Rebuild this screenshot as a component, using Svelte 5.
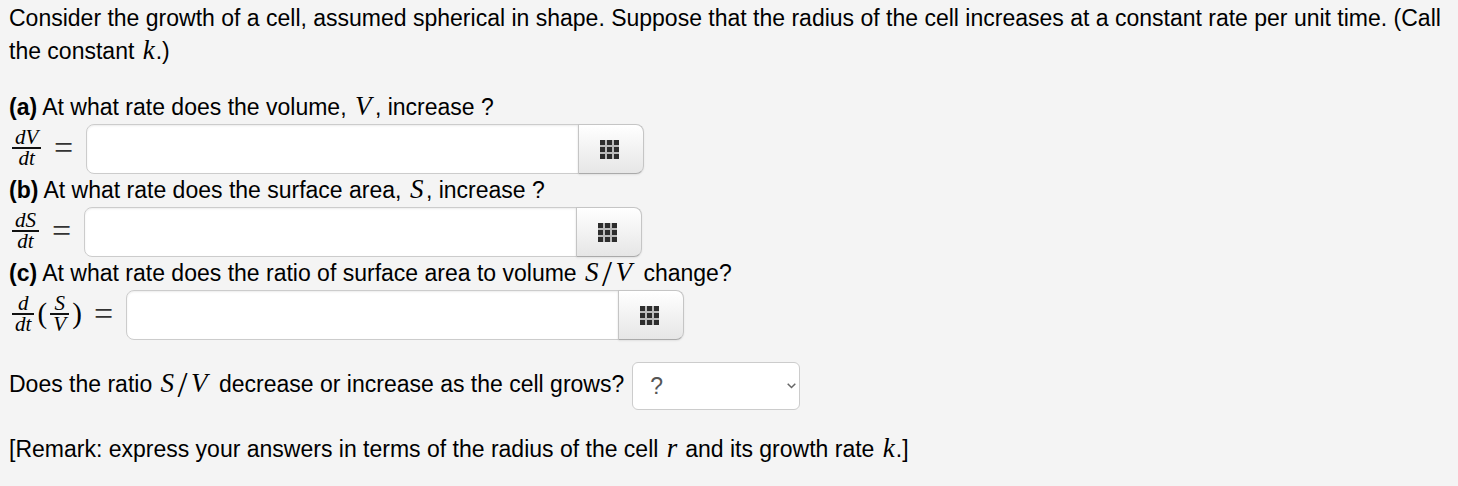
<script>
	let parts = $state([
		{ id: 'volume', name: 'a', before: 'At what rate does the volume,', symbol: 'V', after: ', increase ?', answer: '' },
		{ id: 'surface', name: 'b', before: 'At what rate does the surface area,', symbol: 'S', after: ', increase ?', answer: '' },
		{ id: 'ratio', name: 'c', before: 'At what rate does the ratio of surface area to volume', symbol: 'S/V', after: ' change?', answer: '' }
	])

	let trend = $state('?')
</script>

{#snippet fraction(top, bottom)}
	<span class="fraction">
		<i>{top}</i>
		<i class="bottom">{bottom}</i>
	</span>
{/snippet}

{#snippet symbol(name)}
	{#if name === 'S/V'}
		<i class="math quotient">S<span class="slash">/</span>V</i>
	{:else}
		<i class="math {name}">{name}</i>
	{/if}
{/snippet}

<main>
	<p class="intro">
		Consider the growth of a cell, assumed spherical in shape. Suppose that the radius of the cell increases at a constant rate per unit time. (Call the constant {@render symbol('k')}.)
	</p>

	{#each parts as part}
		<p><b>({part.name})</b> {part.before} {@render symbol(part.symbol)}{part.after}</p>
		<div class="answer">
			<label for={part.id} class={part.id}>
				{#if part.id === 'volume'}
					{@render fraction('dV', 'dt')}
				{:else if part.id === 'surface'}
					{@render fraction('dS', 'dt')}
				{:else}
					{@render fraction('d', 'dt')}
					<span class="paren">(</span>
					{@render fraction('S', 'V')}
					<span class="paren">)</span>
				{/if}
				<span class="equals">=</span>
			</label>
			<div class="group">
				<input id={part.id} type="text" autocomplete="off" bind:value={part.answer} />
				<button type="button" aria-label="Open equation editor">
					<svg width="19" height="19" viewBox="0 0 19 19" fill="#2d2d2d" aria-hidden="true">
						<path d="M0 0H19V19H0z" fill="#bbb" />
						{#each [0, 7, 14] as y}
							{#each [0, 7, 14] as x}
								<rect {x} {y} width="5" height="5" />
							{/each}
						{/each}
					</svg>
				</button>
			</div>
		</div>
	{/each}

	<div class="trend">
		<label for="trend">Does the ratio {@render symbol('S/V')} decrease or increase as the cell grows?</label>
		<div class="select">
			<select id="trend" bind:value={trend}>
				<option>?</option>
				<option>decrease</option>
				<option>increase</option>
			</select>
			<svg width="9" height="6" viewBox="0 0 9 6" fill="none" stroke="#666" stroke-width="1.5" aria-hidden="true">
				<path d="M0.7 0.8 L4.5 4.5 L8.3 0.8" />
			</svg>
		</div>
	</div>

	<p>[Remark: express your answers in terms of the radius of the cell {@render symbol('r')} and its growth rate {@render symbol('k')}.]</p>
</main>

<style>
	:global(body) {
		margin: 0;
		background-color: #f4f4f4;
	}
	main {
		padding: 2px 9px 20px;
		font-family: "Liberation Sans", Arial, sans-serif;
		font-size: 23px;
		line-height: 33px;
		color: #000;
	}
	p {
		margin: 0;
	}
	.intro {
		margin-bottom: 23px;
	}
	.math {
		display: inline-block;
		margin-left: 2px;
		font-family: "Liberation Serif", "Times New Roman", serif;
		font-size: 27px;
		line-height: 24px;
	}
	.V {
		width: 20px;
	}
	.S {
		width: 16px;
	}
	.k {
		width: 13px;
	}
	.r {
		width: 12px;
	}
	.quotient {
		width: 52px;
	}
	.slash {
		display: inline-block;
		width: 17px;
		font-size: 36px;
		font-style: normal;
		text-align: center;
		vertical-align: -5px;
	}
	.answer {
		display: flex;
		align-items: center;
	}
	.answer label {
		display: flex;
		align-items: center;
		flex: none;
		padding-left: 3px;
		box-sizing: border-box;
		font-family: "Liberation Serif", "Times New Roman", serif;
	}
	.volume {
		width: 77px;
	}
	.surface {
		width: 75px;
	}
	.ratio {
		width: 117px;
	}
	.fraction {
		display: flex;
		flex-direction: column;
		padding-bottom: 2px;
		font-size: 21px;
		line-height: 19px;
		text-align: center;
	}
	.fraction i {
		padding: 0 3px;
	}
	.fraction .bottom {
		border-top: 2px solid #111;
	}
	.paren {
		width: 16px;
		padding-bottom: 4px;
		font-size: 29px;
		text-align: center;
	}
	.equals {
		margin-left: auto;
		width: 32px;
		padding-bottom: 4px;
		font-size: 34px;
		color: #333;
	}
	.group {
		display: flex;
		flex: 0 1 558px;
		height: 50px;
	}
	.group input {
		flex: 1;
		min-width: 0;
		box-sizing: border-box;
		padding: 0 12px;
		border: 1px solid #ccc;
		border-radius: 8px 0 0 8px;
		background-color: #fff;
		box-shadow: inset 0 1px 2px rgba(0, 0, 0, 0.08);
		font: inherit;
	}
	.group button {
		display: flex;
		align-items: center;
		justify-content: center;
		width: 66px;
		margin-left: -1px;
		padding: 0 3px 0 0;
		border: 1px solid #c5c5c5;
		border-bottom-color: #aaa;
		border-radius: 0 8px 8px 0;
		background: linear-gradient(#fff, #e6e6e6);
		box-shadow: 0 1px 2px rgba(0, 0, 0, 0.08);
		cursor: pointer;
	}
	.trend {
		display: flex;
		align-items: center;
		margin: 22px 0 23px;
	}
	.trend label {
		padding-bottom: 4px;
	}
	.select {
		position: relative;
		margin-left: 8px;
	}
	.select select {
		display: block;
		width: 168px;
		height: 48px;
		padding: 0 17px;
		border: 1px solid #ccc;
		border-radius: 6px;
		background-color: #fff;
		font: inherit;
		color: #555;
		appearance: none;
	}
	.select svg {
		position: absolute;
		right: 4px;
		top: 21px;
		pointer-events: none;
	}
</style>
